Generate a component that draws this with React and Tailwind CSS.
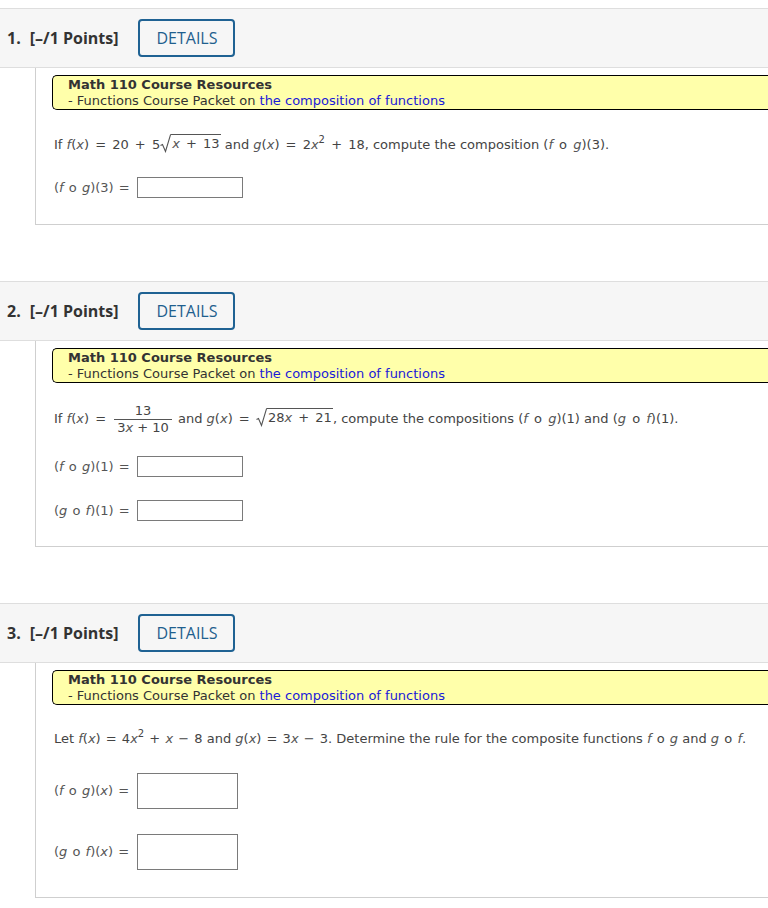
import React from "react";

const M = ({ children }) => <i className="text-[#555]">{children}</i>;

const Op = ({ children }) => <span className="mx-[2px]">{children}</span>;
const Os = ({ children }) => <span className="mx-[1px]">{children}</span>;

const Sup = ({ children }) => (
  <span className="relative top-[-6px] text-[10px] leading-none">{children}</span>
);

const Sqrt = ({ children }) => (
  <span className="inline-flex items-stretch align-[-4px]">
    <svg width="11" height="19" viewBox="0 0 11 19" className="shrink-0">
      <path d="M0.5 11.5 L2.5 10.5 L5.5 17.5 L10.5 0.8 L11 0.8" fill="none" stroke="#555" strokeWidth="1.1" />
    </svg>
    <span className="border-t border-[#555] leading-[17px] pl-[1px] pr-[1px]">{children}</span>
  </span>
);

const Frac = ({ num, den }) => (
  <span className="inline-flex flex-col items-center align-middle mx-[2px]">
    <span className="leading-[16px] px-[1px]">{num}</span>
    <span className="border-t border-[#555] leading-[16px] px-[3px]">{den}</span>
  </span>
);

const Header = ({ n }) => (
  <div className="h-[60px] border-y border-[#dedede] bg-[#f6f6f6] flex items-center pl-[7px] font-['Open_Sans',sans-serif] text-[#333]">
    <span className="text-[16px] font-bold">{n}.</span>
    <span className="text-[16px] font-bold ml-[9px]">[–/1 Points]</span>
    <button className="ml-[20px] w-[97px] h-[38px] border-2 border-[#1f6293] rounded-[4px] text-[#1f5f8e] text-[16px] bg-transparent">
      DETAILS
    </button>
  </div>
);

const Resources = () => (
  <div className="h-[35px] border border-r-0 border-black rounded-l-[5px] bg-[#ffffaa] pl-[15px] pt-px text-[13px] leading-[16px] text-[#333] whitespace-nowrap">
    <div className="font-bold">Math 110 Course Resources</div>
    <div>
      - Functions Course Packet on <span className="text-[#1a1ad8]">the composition of functions</span>
    </div>
  </div>
);

const Input = ({ w, h }) => (
  <div className={`${w} ${h} border border-[#7a7a7a] bg-white`} />
);

export default function App() {
  return (
    <div className="w-full overflow-hidden bg-white pt-[8px] pb-[10px] font-['DejaVu_Sans',Verdana,sans-serif] text-[13px] text-[#444]">
      {/* Question 1 */}
      <section>
        <Header n={1} />
        <div className="ml-[35px] border-l border-b border-[#cfcfcf] pl-[16px] pt-[7px] pb-[26px]">
          <Resources />
          <div className="pl-[2px] mt-[24px] h-[20px] leading-[20px] whitespace-nowrap">
            If <M>f</M>(<M>x</M>) <Op>=</Op> 20 <Op>+</Op> 5<Sqrt><M>x</M> <Op>+</Op> 13</Sqrt> and <M>g</M>(<M>x</M>) <Op>=</Op> 2<M>x</M><Sup>2</Sup> <Op>+</Op> 18, compute the composition (<M>f</M> <Op>o</Op> <M>g</M>)(3).
          </div>
          <div className="pl-[2px] mt-[23px] flex items-center h-[21px]">
            <span className="text-[#555] whitespace-nowrap">(<i>f</i> <Os>o</Os> <i>g</i>)(3) <Os>=</Os></span>
            <div className="ml-[6px]"><Input w="w-[106px]" h="h-[21px]" /></div>
          </div>
        </div>
      </section>

      {/* Question 2 */}
      <section className="mt-[56px]">
        <Header n={2} />
        <div className="ml-[35px] border-l border-b border-[#cfcfcf] pl-[16px] pt-[7px] pb-[25px]">
          <Resources />
          <div className="pl-[2px] mt-[19px] h-[34px] flex items-center">
            <span className="whitespace-nowrap leading-[20px]">
              If <M>f</M>(<M>x</M>) <Op>=</Op> <Frac num="13" den={<>3<M>x</M> + 10</>} /> and <M>g</M>(<M>x</M>) <Op>=</Op> <Sqrt>28<M>x</M> <Op>+</Op> 21</Sqrt>, compute the compositions (<M>f</M> <Op>o</Op> <M>g</M>)(1) and (<M>g</M> <Op>o</Op> <M>f</M>)(1).
            </span>
          </div>
          <div className="pl-[2px] mt-[20px] flex items-center h-[21px]">
            <span className="text-[#555] whitespace-nowrap">(<i>f</i> <Os>o</Os> <i>g</i>)(1) <Os>=</Os></span>
            <div className="ml-[6px]"><Input w="w-[106px]" h="h-[21px]" /></div>
          </div>
          <div className="pl-[2px] mt-[23px] flex items-center h-[21px]">
            <span className="text-[#555] whitespace-nowrap">(<i>g</i> <Os>o</Os> <i>f</i>)(1) <Os>=</Os></span>
            <div className="ml-[6px]"><Input w="w-[106px]" h="h-[21px]" /></div>
          </div>
        </div>
      </section>

      {/* Question 3 */}
      <section className="mt-[56px]">
        <Header n={3} />
        <div className="ml-[35px] border-l border-b border-[#cfcfcf] pl-[16px] pt-[7px] pb-[27px]">
          <Resources />
          <div className="pl-[2px] mt-[24px] h-[20px] leading-[20px] whitespace-nowrap">
            Let <M>f</M>(<M>x</M>) <Os>=</Os> 4<M>x</M><Sup>2</Sup> <Os>+</Os> <M>x</M> <Os>−</Os> 8 and <M>g</M>(<M>x</M>) <Os>=</Os> 3<M>x</M> <Os>−</Os> 3. Determine the rule for the composite functions <M>f</M> <Os>o</Os> <M>g</M> and <M>g</M> <Os>o</Os> <M>f</M>.
          </div>
          <div className="pl-[2px] mt-[24px] flex items-center h-[36px]">
            <span className="text-[#555] whitespace-nowrap">(<i>f</i> <Os>o</Os> <i>g</i>)(<i>x</i>) <Os>=</Os></span>
            <div className="ml-[7px]"><Input w="w-[101px]" h="h-[36px]" /></div>
          </div>
          <div className="pl-[2px] mt-[25px] flex items-center h-[36px]">
            <span className="text-[#555] whitespace-nowrap">(<i>g</i> <Os>o</Os> <i>f</i>)(<i>x</i>) <Os>=</Os></span>
            <div className="ml-[7px]"><Input w="w-[101px]" h="h-[36px]" /></div>
          </div>
        </div>
      </section>
    </div>
  );
}
